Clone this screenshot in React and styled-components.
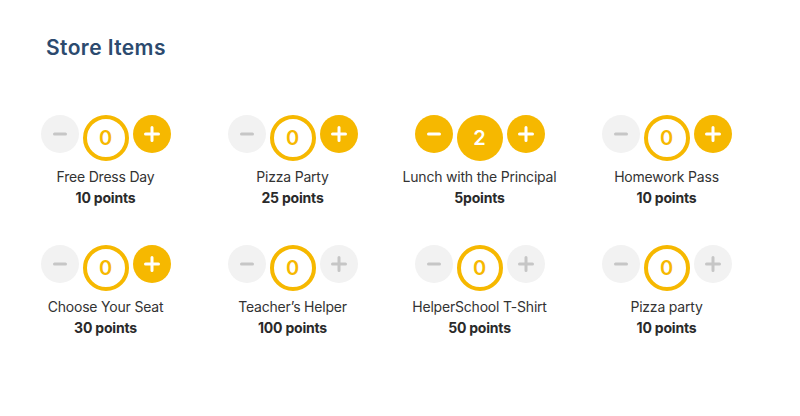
import React from 'react'
import styled, { createGlobalStyle, css } from 'styled-components'

const yellow = '#f6b800'

const Global = createGlobalStyle`
  html, body {
    margin: 0;
    padding: 0;
    background: #fff;
    font-family: Inter, "Open Sans", sans-serif;
  }
`

const Page = styled.div`
  width: 800px;
  height: 416px;
  padding-top: 35px;
  box-sizing: border-box;
`

const Title = styled.h1`
  margin: 0 0 0 46px;
  font-size: 21px;
  line-height: 26px;
  font-weight: 600;
  color: #2c4a6e;
  letter-spacing: 0.4px;
`

const Grid = styled.div`
  display: grid;
  grid-template-columns: repeat(4, 187px);
  row-gap: 36px;
  margin: 54px 0 0 12px;
`

const Item = styled.div`
  display: flex;
  flex-direction: column;
  align-items: center;
`

const Stepper = styled.div`
  display: flex;
  align-items: flex-start;
  gap: 4px;
  height: 46px;
`

const Round = styled.button`
  width: 38px;
  height: 38px;
  border-radius: 50%;
  border: 0;
  padding: 0;
  display: flex;
  align-items: center;
  justify-content: center;
  background: ${p => (p.$on ? yellow : '#f2f2f2')};
  color: ${p => (p.$on ? '#fff' : '#c6c6c6')};
  cursor: pointer;
`

const Count = styled.div`
  width: 46px;
  height: 46px;
  box-sizing: border-box;
  border-radius: 50%;
  display: flex;
  align-items: center;
  justify-content: center;
  font-size: 20px;
  font-weight: 600;
  ${p =>
    p.$filled
      ? css`
          background: ${yellow};
          color: #fff;
        `
      : css`
          background: #fff;
          border: 4px solid ${yellow};
          color: ${yellow};
        `}
`

const Name = styled.div`
  margin-top: 6px;
  font-size: 14px;
  line-height: 20px;
  color: #333;
  letter-spacing: -0.2px;
`

const Points = styled.div`
  font-size: 14px;
  line-height: 22px;
  font-weight: 700;
  color: #2a2a2a;
  letter-spacing: -0.2px;
`

const Minus = () => (
  <svg width="14" height="14" viewBox="0 0 14 14">
    <path d="M1.5 7h11" stroke="currentColor" strokeWidth="3" strokeLinecap="round" />
  </svg>
)

const Plus = () => (
  <svg width="16" height="16" viewBox="0 0 16 16">
    <path d="M8 1.5v13M1.5 8h13" stroke="currentColor" strokeWidth="3" strokeLinecap="round" />
  </svg>
)

const items = [
  { name: 'Free Dress Day', points: '10 points', count: 0, add: true },
  { name: 'Pizza Party', points: '25 points', count: 0, add: true },
  { name: 'Lunch with the Principal', points: '5points', count: 2, add: true },
  { name: 'Homework Pass', points: '10 points', count: 0, add: true },
  { name: 'Choose Your Seat', points: '30 points', count: 0, add: true },
  { name: 'Teacher\u2019s Helper', points: '100 points', count: 0, add: false },
  { name: 'HelperSchool T-Shirt', points: '50 points', count: 0, add: false },
  { name: 'Pizza party', points: '10 points', count: 0, add: false },
]

export default function App() {
  return (
    <Page>
      <Global />
      <Title>Store Items</Title>
      <Grid>
        {items.map(it => (
          <Item key={it.name}>
            <Stepper>
              <Round $on={it.count > 0}><Minus /></Round>
              <Count $filled={it.count > 0}>{it.count}</Count>
              <Round $on={it.add}><Plus /></Round>
            </Stepper>
            <Name>{it.name}</Name>
            <Points>{it.points}</Points>
          </Item>
        ))}
      </Grid>
    </Page>
  )
}
